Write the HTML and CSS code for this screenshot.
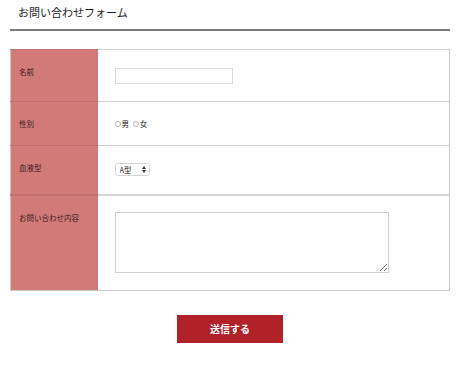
FILE: index.html
```html
<!DOCTYPE html>
<html lang="ja">
<head>
    <meta charset="UTF-8">
    <meta name="viewport" content="width=device-width, initial-scale=1.0">
    <title>お問い合わせフォーム</title>
    <link rel="stylesheet" href="styles.css">
</head>
<body>

    <div class="contact">
        <h1 class="contact-title">お問い合わせフォーム</h1>

        <form class="contact-form">
            <table class="form-table">
                <tr class="row-name">
                    <th>名前</th>
                    <td><input type="text" class="text-input"></td>
                </tr>
                <tr class="row-gender">
                    <th>性別</th>
                    <td>
                        <label class="radio"><input type="radio" name="gender">男</label>
                        <label class="radio"><input type="radio" name="gender">女</label>
                    </td>
                </tr>
                <tr class="row-blood">
                    <th>血液型</th>
                    <td>
                        <span class="select-wrap">
                            <select class="select">
                                <option>A型</option>
                                <option>B型</option>
                                <option>O型</option>
                                <option>AB型</option>
                            </select>
                            <svg class="select-arrow" width="4" height="7" viewBox="0 0 4 7">
                                <path d="M0 3 L2 0 L4 3 Z M0 4 L2 7 L4 4 Z" fill="#333"/>
                            </svg>
                        </span>
                    </td>
                </tr>
                <tr class="row-message">
                    <th>お問い合わせ内容</th>
                    <td><textarea class="textarea"></textarea></td>
                </tr>
            </table>

            <div class="submit-area">
                <button type="submit" class="submit-btn">送信する</button>
            </div>
        </form>
    </div>

</body>
</html>
```

FILE: styles.css
```css
* {
    box-sizing: border-box;
    font-family: "Noto Sans CJK JP", "Noto Sans", sans-serif;
}
body {
    margin: 0;
    background: #fff;
    color: #333;
}
.contact {
    padding: 0 24px 0 10px;
}
.contact-title {
    margin: 0;
    height: 31px;
    padding: 5px 0 0 8px;
    font-size: 11px;
    font-weight: normal;
    line-height: 14px;
    color: #222;
    border-bottom: 2px solid #7a7a7a;
}
.form-table {
    width: 440px;
    margin-top: 18px;
    border-collapse: collapse;
    border: 1px solid #c8c8c8;
}
.form-table th,
.form-table td {
    border-top: 1px solid #cfcfcf;
}
.form-table th {
    width: 87px;
    padding: 17px 8px 0;
    vertical-align: top;
    background: #d27a78;
    color: #3a1a1a;
    font-size: 7.5px;
    font-weight: normal;
    text-align: left;
    line-height: 9px;
    border-top-color: #c0706e;
}
.form-table td {
    padding: 0 17px;
    vertical-align: middle;
    font-size: 7.5px;
    line-height: 9px;
}
.row-name {
    height: 52px;
}
.row-gender {
    height: 44px;
}
.row-blood {
    height: 49px;
}
.row-message {
    height: 96px;
}
.row-blood th,
.row-blood td {
    border-bottom: 2px solid #d6d6d6;
}
.row-blood th {
    border-bottom-color: #c0706e;
}
.text-input {
    display: block;
    width: 118px;
    height: 16px;
    border: 1px solid #dcdcdc;
    padding: 0 3px;
    font-size: 8px;
}
.radio {
    display: inline-flex;
    align-items: center;
    margin-right: 2px;
    color: #222;
}
.radio input {
    appearance: none;
    width: 6px;
    height: 6px;
    margin: 0 1px 0 0;
    border: 1px solid #b5b5b5;
    border-radius: 50%;
    background: #fff;
}
.select-wrap {
    position: relative;
    display: inline-block;
    vertical-align: middle;
}
.select {
    appearance: none;
    display: block;
    width: 35px;
    height: 13px;
    padding: 0 0 0 4px;
    border: 1px solid #d4d4d4;
    border-radius: 3px;
    background: #fff;
    font-size: 7.5px;
    color: #222;
}
.select-arrow {
    position: absolute;
    right: 4px;
    top: 3px;
}
.textarea {
    display: block;
    width: 274px;
    height: 61px;
    border: 1px solid #cfcfcf;
    resize: both;
}
.submit-area {
    width: 440px;
    padding-top: 23px;
    text-align: center;
}
.submit-btn {
    width: 106px;
    height: 28px;
    background: #b0212a;
    color: #fff;
    border: none;
    font-size: 10px;
    font-weight: bold;
    cursor: pointer;
}
.submit-btn:hover {
    background: #961820;
}
```
